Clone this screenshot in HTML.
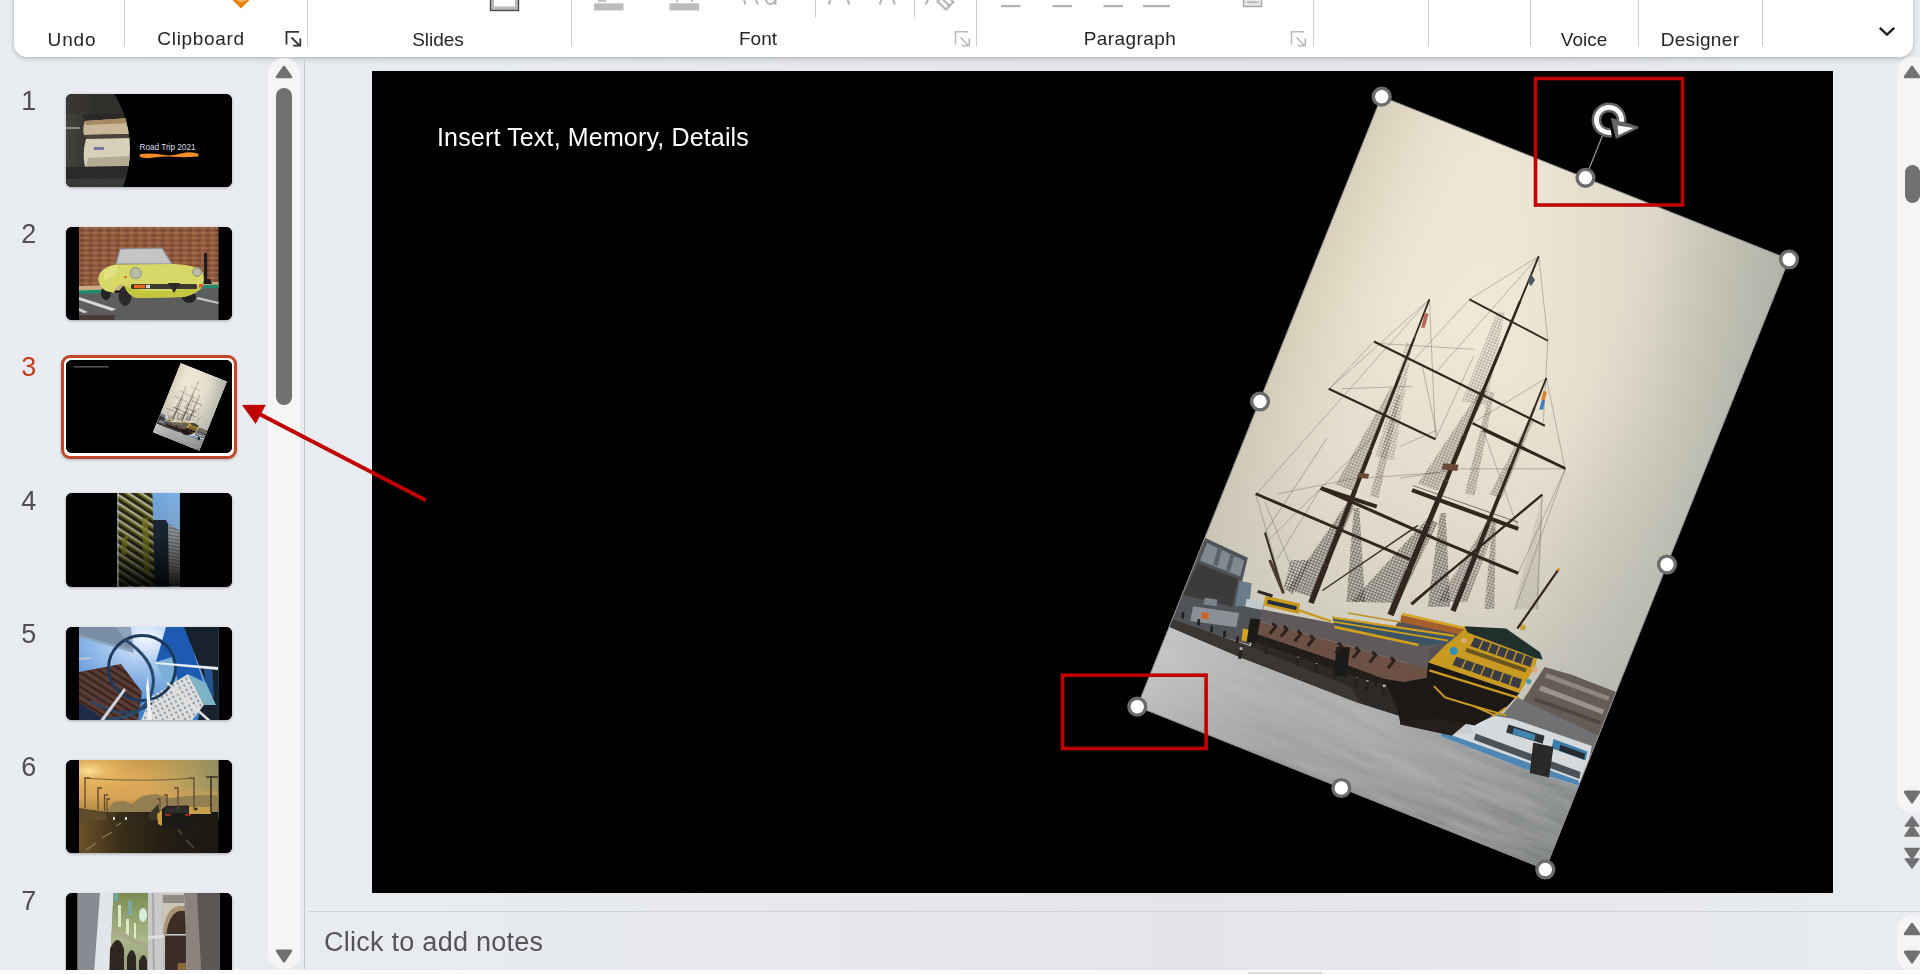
<!DOCTYPE html>
<html>
<head>
<meta charset="utf-8">
<title>PowerPoint</title>
<style>
*{box-sizing:border-box;margin:0;padding:0}
html,body{width:1920px;height:974px;overflow:hidden}
body{background:linear-gradient(90deg,#e9edf2 0%,#e8ebf0 22%,#e5e7ec 45%,#e4e5ea 62%,#e6e8ed 85%,#e8ecf0 100%);font-family:"Liberation Sans",sans-serif;position:relative;color:#222}
.abs{position:absolute}
.rl,.num,#stitle,#notes{will-change:transform}
#ribbon{left:14px;top:-20px;width:1899px;height:77px;background:#fff;border-radius:0 0 13px 13px;box-shadow:0 2px 5px rgba(70,80,92,.27),0 0 2px rgba(70,80,92,.2)}
.rl{position:absolute;top:28px;font-size:19px;line-height:22px;color:#262626;white-space:nowrap;transform:translateX(-50%)}
.sep{position:absolute;top:0;width:1px;height:46px;background:#cdcdcd}
.num{position:absolute;left:0;width:57.5px;text-align:center;font-size:27px;line-height:30px;color:#505050}
.th{position:absolute;left:65.5px;width:166px;height:93.4px;border-radius:6px;background:#000;overflow:hidden;box-shadow:0 1px 3px rgba(0,0,0,.3)}
#slide{left:372px;top:71px;width:1461px;height:822px;background:#000}
#stitle{left:436.8px;top:122px;font-size:25px;line-height:30px;letter-spacing:.16px;color:#fff;white-space:nowrap}
#notes{left:324.3px;top:926px;font-size:27px;letter-spacing:.26px;line-height:32px;color:#555;white-space:nowrap}
</style>
</head>
<body>
<!-- RIBBON -->
<div id="ribbon" class="abs"></div>
<div id="ribbonc" class="abs" style="left:0;top:0;width:1920px;height:56px">
  <div class="sep" style="left:124px"></div>
  <div class="sep" style="left:307px"></div>
  <div class="sep" style="left:571px"></div>
  <div class="sep" style="left:976px"></div>
  <div class="sep" style="left:1313px"></div>
  <div class="sep" style="left:1428px"></div>
  <div class="sep" style="left:1530px"></div>
  <div class="sep" style="left:1638px"></div>
  <div class="sep" style="left:1762px"></div>

  <!-- icon fragments at top -->
  <svg class="abs" style="left:0;top:0" width="1920" height="20" viewBox="0 0 1920 20">
    <path d="M232.5 0 L241 8.6 L249.5 0 Z" fill="#e8820c"/>
    <path d="M237 0 a5 4 0 0 0 8 1 l2 -1z" fill="#f6b36a"/>
    <rect x="490.5" y="-4" width="28" height="14.5" fill="#b9b9b9" stroke="#4d4d4d" stroke-width="1.4"/>
    <rect x="494" y="-4" width="21" height="10.5" fill="#fff"/>
    <rect x="594" y="3.3" width="29.6" height="7.2" fill="#bdbdbd"/>
    <rect x="598" y="-2" width="8" height="4" fill="#c4c4c4"/>
    <rect x="669.5" y="3.3" width="29.6" height="7.2" fill="#bdbdbd"/>
    <rect x="676" y="-2" width="2" height="4" fill="#bdbdbd"/><rect x="691" y="-2" width="2" height="4" fill="#bdbdbd"/>
    <g fill="none" stroke="#b4b4b4" stroke-width="2">
      <path d="M745.5 4.5 L744 0 M758 4.5 L756 0"/>
      <path d="M766 -1 a4.5 5 0 0 0 9 0 M775.5 -3 V5"/>
      <path d="M828.5 4.5 L830.5 0 M849.5 4.5 L847.5 0"/>
      <path d="M879.5 4.5 L881.5 0 M895 4.5 L893 0"/>
      <path d="M925.5 4.5 L928 0"/>
      <path d="M937.5 1.5 L945 -6 L953.5 2 L946 9.5 Z M941 -2.5 L949.5 6" stroke-width="2"/>
    </g>
    <rect x="815" y="0" width="1" height="17.5" fill="#d0d0d0"/>
    <rect x="914" y="0" width="1" height="17.5" fill="#d0d0d0"/>
    <g fill="#b2b2b2">
      <rect x="1001" y="5" width="19.5" height="2.2"/>
      <rect x="1052.5" y="5" width="19.5" height="2.2"/>
      <rect x="1103.5" y="5" width="19.5" height="2.2"/>
      <rect x="1143" y="5" width="27" height="2.2"/>
    </g>
    <rect x="1243.5" y="-3" width="18" height="9.5" fill="#e4e4e4" stroke="#aaa" stroke-width="1.5"/>
    <rect x="1247" y="1.5" width="11" height="1.3" fill="#aaa"/>
  </svg>
  <!-- dialog launchers -->
  <svg class="abs" style="left:285.4px;top:30.4px" width="17" height="17" viewBox="0 0 17 17"><path d="M1.5 14.5 V1.8 H14" fill="none" stroke="#333" stroke-width="1.8"/><path d="M6.5 7.5 L14.8 15.8 M15.3 8.5 V15.6 H8.2" fill="none" stroke="#333" stroke-width="1.8"/></svg>
  <svg class="abs" style="left:954px;top:30px" width="17" height="17" viewBox="0 0 17 17"><path d="M1.5 14.5 V1.8 H14" fill="none" stroke="#b9b9b9" stroke-width="1.5"/><path d="M6.5 7.5 L14.8 15.8 M15.3 8.5 V15.6 H8.2" fill="none" stroke="#b9b9b9" stroke-width="1.6"/></svg>
  <svg class="abs" style="left:1290px;top:30px" width="17" height="17" viewBox="0 0 17 17"><path d="M1.5 14.5 V1.8 H14" fill="none" stroke="#b9b9b9" stroke-width="1.5"/><path d="M6.5 7.5 L14.8 15.8 M15.3 8.5 V15.6 H8.2" fill="none" stroke="#b9b9b9" stroke-width="1.6"/></svg>
  <svg class="abs" style="left:1876px;top:24px" width="22" height="16" viewBox="0 0 22 16"><path d="M3.8 3.8 L11 10.6 L18.2 3.8" fill="none" stroke="#1f1f1f" stroke-width="2.4"/></svg>
  <div class="rl" style="left:72px;top:29px;letter-spacing:.85px">Undo</div>
  <div class="rl" style="left:200.8px;letter-spacing:.66px">Clipboard</div>
  <div class="rl" style="left:438px;top:29px">Slides</div>
  <div class="rl" style="left:758px">Font</div>
  <div class="rl" style="left:1129.5px;letter-spacing:.42px">Paragraph</div>
  <div class="rl" style="left:1583.6px;top:29px">Voice</div>
  <div class="rl" style="left:1699.6px;top:29px;letter-spacing:.32px">Designer</div>
</div>
<!-- LEFT PANEL -->

<!-- left scrollbar -->
<div class="abs" style="left:268px;top:58px;width:32px;height:911.5px;background:#f5f5f5;border-radius:16px"></div>
<div class="abs" style="left:276px;top:87.5px;width:16px;height:317.5px;background:#717171;border-radius:8px"></div>
<svg class="abs" style="left:272px;top:62px" width="24" height="20" viewBox="0 0 24 20"><path d="M12 5.3 L18.7 14.8 H5.3 Z" fill="#717171" stroke="#717171" stroke-width="3" stroke-linejoin="round"/></svg>
<svg class="abs" style="left:272px;top:946px" width="24" height="20" viewBox="0 0 24 20"><path d="M12 15 L18.7 5 H5.3 Z" fill="#717171" stroke="#717171" stroke-width="3" stroke-linejoin="round"/></svg>
<div class="abs" style="left:304px;top:60px;width:1px;height:909px;background:#c5c7ca"></div>
<!-- numbers -->
<div class="num" style="top:85.6px">1</div>
<div class="num" style="top:218.9px">2</div>
<div class="num" style="top:352.2px;color:#c43e1c">3</div>
<div class="num" style="top:485.6px">4</div>
<div class="num" style="top:618.9px">5</div>
<div class="num" style="top:752.2px">6</div>
<div class="num" style="top:885.6px">7</div>
<!-- selection frame -->
<div class="abs" style="left:60.5px;top:354.5px;width:176.5px;height:104.5px;border:3.5px solid #bf472a;border-radius:9px;background:#fff;box-shadow:0 1px 3px rgba(0,0,0,.25)"></div>
<!-- thumbs -->
<div class="th" id="t1" style="top:93.5px"><svg viewBox="0 0 166 93.4" width="166" height="93.4" style="display:block">
<defs><clipPath id="c1"><circle cx="-40" cy="55" r="104"/></clipPath>
<linearGradient id="g1" x1="0" y1="0" x2="1" y2="0"><stop offset="0" stop-color="#45423d"/><stop offset=".25" stop-color="#3a3835"/><stop offset=".4" stop-color="#2a2927"/></linearGradient></defs>
<rect width="166" height="93.4" fill="#000"/>
<g clip-path="url(#c1)"><rect width="70" height="93.4" fill="url(#g1)"/>
<rect x="0" y="0" width="70" height="20" fill="#35322f" opacity=".7"/>
<path d="M16 21 L64 19 L64 24 L20 28 Z" fill="#2b2927"/>
<path d="M19 27 L64 24 L64 40 L18 41 Q16 34 19 27Z" fill="#c9b99a"/>
<path d="M19 27 L64 24 L64 29 L20 31Z" fill="#a88a62"/>
<path d="M18 41 L64 40 L64 44 L20 45Z" fill="#4a443c"/>
<path d="M20 45 L66 44 L66 72 L19 73 Q16 58 20 45Z" fill="#d6cfb9"/>
<path d="M22 64 L66 62 L66 72 L20 73Z" fill="#b5ab92"/>
<rect x="28" y="53" width="10" height="3" fill="#5a5f9a" opacity=".8"/>
<rect x="0" y="33" width="14" height="2" fill="#8a8780"/>
<path d="M0 73 L66 72 L66 93.4 L0 93.4Z" fill="#2b2a28"/>
<path d="M0 85 L66 84 L66 93.4 L0 93.4Z" fill="#3a3937"/></g>
<text x="73.5" y="55.6" font-family="Liberation Sans, sans-serif" font-size="9.4" fill="#dcdce8" textLength="56" lengthAdjust="spacingAndGlyphs">Road Trip 2021</text>
<path d="M73.5 60.2 Q85 58.6 95 60.6 T115 59.6 T132.5 59.8 L132.3 62.6 Q118 63.6 108 62.8 T88 63.6 T73.8 62.8Z" fill="#f08a24"/>
</svg></div>
<div class="th" id="t2" style="top:226.8px"><svg viewBox="0 0 166 93.4" width="166" height="93.4" style="display:block">
<defs><pattern id="brk" width="9" height="5" patternUnits="userSpaceOnUse"><rect width="9" height="5" fill="#8d583d"/><rect x="0" y="0" width="4" height="2" fill="#a56a48"/><rect x="5" y="2.5" width="3.5" height="2" fill="#74452f"/><rect x="4.5" y="0" width="3" height="1.6" fill="#96614a"/></pattern></defs>
<rect width="166" height="93.4" fill="#000"/>
<rect x="13" y="0" width="139.5" height="62" fill="url(#brk)"/>
<path d="M13 59 L152.5 55 L152.5 60 L13 65Z" fill="#c9ab86"/>
<path d="M13 63.5 L40 62.5 L40 67 L13 68Z" fill="#1f8a6c"/><path d="M128 58.5 L152.5 57.5 L152.5 61 L128 62Z" fill="#1f8a6c"/>
<path d="M13 67 L152.5 61 L152.5 93.4 L13 93.4Z" fill="#5c5e5d"/>
<path d="M13 70 L50 82 L46 84 L13 73Z" fill="#d8d8d8"/><path d="M13 81 L22 85 L18 86 L13 84Z" fill="#cfcfcf"/><path d="M132 70 L152.5 75 L152.5 77 L130 72Z" fill="#c8c8c8"/>
<path d="M13 88 L50 88 L48 93.4 L13 93.4Z" fill="#4a3c34"/>
<rect x="138" y="26" width="3.2" height="30" fill="#1e1c1c"/><path d="M136 52 L144 52 L146 57 L136 57Z" fill="#1e1c1c"/>
<path d="M50 37 L54 22 L96 21 L106 37Z" fill="#c4c6c6" stroke="#8a8c8c" stroke-width="1.2"/>
<ellipse cx="40" cy="66" rx="5" ry="7" fill="#252423"/><ellipse cx="59" cy="69" rx="6.5" ry="10" fill="#2a2928"/><ellipse cx="123" cy="70" rx="7" ry="6" fill="#252423"/>
<path d="M32 52 Q34 40 50 37.5 L106 37 Q130 38 136 44 Q139 52 137 58 Q134 66 118 70 L72 71 Q62 70 58 58 Q50 56 48 66 L40 64 Q33 60 32 52Z" fill="#d6d968"/>
<path d="M58 58 Q62 70 72 71 L118 70 Q132 66 136 58 Q120 64 90 64 Q70 64 58 58Z" fill="#c4c640"/>
<path d="M38 44 Q44 39 52 38 L50 48 Q44 50 38 54Z" fill="#e4e68a" opacity=".7"/>
<rect x="65" y="57" width="66" height="5" rx="1.5" fill="#3c3a30"/><rect x="68" y="57.8" width="11" height="3.4" fill="#e8681c"/><rect x="80" y="57.8" width="4" height="3.4" fill="#d8d8d0"/><rect x="133" y="57" width="4" height="3.5" fill="#d8602a"/>
<path d="M102 56 L114 56 L108 66Z" fill="#2a2a28"/>
<circle cx="69.7" cy="46.2" r="5.6" fill="#b9bca6" stroke="#8e9078" stroke-width="1"/><circle cx="131" cy="45" r="4.4" fill="#b9bca6" stroke="#8e9078" stroke-width="1"/>
<circle cx="59.5" cy="50" r="1.3" fill="#d8602a"/>
</svg></div>
<div class="th" id="t3" style="top:360.1px;box-shadow:none"><svg viewBox="0 0 166 93.4" width="166" height="93.4" style="display:block"><rect width="166" height="93.4" fill="#000"/><g transform="scale(0.11362) translate(-372 -71)"><use href="#pic"/></g><rect x="7.6" y="6.3" width="35" height="1.1" fill="#777"/></svg></div>
<div class="th" id="t4" style="top:493.4px"><svg viewBox="0 0 166 93.4" width="166" height="93.4" style="display:block">
<defs><pattern id="strp" width="10" height="7" patternUnits="userSpaceOnUse" patternTransform="rotate(33)"><rect width="10" height="7" fill="#2a2a18"/><rect y="0" width="10" height="2.1" fill="#b4b49c"/><rect y="2.1" width="10" height="1.5" fill="#7c7c22"/></pattern>
<linearGradient id="sky4" x1="0" y1="0" x2="1" y2="1"><stop offset="0" stop-color="#5a9ad8"/><stop offset="1" stop-color="#a4c8f0"/></linearGradient>
<linearGradient id="dk4" x1="0" y1="0" x2="0" y2="1"><stop offset="0" stop-color="#000" stop-opacity="0"/><stop offset=".45" stop-color="#000" stop-opacity=".15"/><stop offset=".8" stop-color="#000" stop-opacity=".6"/><stop offset="1" stop-color="#000" stop-opacity=".9"/></linearGradient>
<pattern id="gr4" width="3" height="3.4" patternUnits="userSpaceOnUse" patternTransform="rotate(12)"><rect width="3" height="3.4" fill="#7c8084"/><rect width="3" height="1.5" fill="#a8acae"/></pattern></defs>
<rect width="166" height="93.4" fill="#000"/>
<rect x="51.4" y="0" width="62.5" height="93.4" fill="url(#sky4)"/>
<path d="M87 27 L100 27 L102 31 L113.9 38 L113.9 93.4 L87 93.4Z" fill="#1c2a36"/>
<path d="M102 31 L113.9 38 L113.9 93.4 L103 93.4Z" fill="url(#gr4)"/>
<path d="M51.4 0 L86.4 0 L88.7 93.4 L51.4 93.4Z" fill="url(#strp)"/>
<path d="M76 25 L82 25 L84 80 L78 80Z" fill="#8a8a22" opacity=".7"/><path d="M56 45 L62 42 L60 62 L55 62Z" fill="#8a8a22" opacity=".7"/>
<rect x="51.4" y="0" width="62.5" height="93.4" fill="url(#dk4)"/>
<rect x="51.4" y="0" width="1.2" height="93.4" fill="#c8c8c0" opacity=".6"/>
</svg></div>
<div class="th" id="t5" style="top:626.7px"><svg viewBox="0 0 166 93.4" width="166" height="93.4" style="display:block">
<defs><radialGradient id="sky5" cx=".48" cy=".12" r=".8"><stop offset="0" stop-color="#f4f8ff"/><stop offset=".35" stop-color="#a8c8f0"/><stop offset="1" stop-color="#3f82cc"/></radialGradient>
<pattern id="br5" width="6" height="6" patternUnits="userSpaceOnUse" patternTransform="rotate(32)"><rect width="6" height="6" fill="#5c3c36"/><rect width="6" height="2.4" fill="#3a2420"/></pattern>
<pattern id="wh5" width="5" height="5" patternUnits="userSpaceOnUse" patternTransform="rotate(-28)"><rect width="5" height="5" fill="#dedede"/><rect x="1" y="1" width="2" height="2.4" fill="#8e98a4"/></pattern></defs>
<rect width="166" height="93.4" fill="#000"/>
<rect x="13" y="0" width="139.5" height="93.4" fill="url(#sky5)"/>
<path d="M13 0 L65 0 L68 26 L13 10Z" fill="#8ea4bc"/><path d="M13 0 L50 0 L66 22 L13 8Z" fill="#6c8098" opacity=".6"/>
<path d="M13 31 L25 30 L25 32 L13 33Z" fill="#b8c8d8"/>
<path d="M13 45 L55 37 L76 65 L72 93.4 L13 93.4Z" fill="url(#br5)"/>
<path d="M13 75 L40 93.4 L13 93.4Z" fill="#1e2c48"/>
<path d="M100 0 L120 0 L137 55 L106 62 L90 35Z" fill="#1d5ab2"/>
<path d="M90 35 L106 30 L112 55 L100 60Z" fill="#7ab0d8"/>
<path d="M118 0 L152.5 0 L152.5 93.4 L132 93.4 L140 56Z" fill="#18222c"/>
<path d="M138 40 L146 40 L148 70 L140 70Z" fill="#2a6ab8" opacity=".7"/>
<path d="M85 70 L122 47 L138 78 L126 93.4 L75 93.4Z" fill="url(#wh5)"/>
<path d="M122 47 L140 56 L150 78 L138 78Z" fill="#7fb4c8"/>
<ellipse cx="76" cy="41" rx="33.5" ry="32.5" fill="none" stroke="#1c3a5c" stroke-width="3"/>
<path d="M58 12 Q100 40 82 74 Q70 92 36 93" fill="none" stroke="#2a4a6c" stroke-width="3"/>
<path d="M25 74 Q60 96 86 76" fill="none" stroke="#28466a" stroke-width="2.5"/>
<path d="M89 35 L152 40 L152 43 L90 37Z" fill="#e8ecf0"/>
<path d="M82 48 L86 93.4 L82 93.4 L80 60Z" fill="#f0f0f0"/>
<path d="M58 61 L60 63 L38 93.4 L34 93.4Z" fill="#d0d4dc"/>
<path d="M102 55 L145 93.4 L141 93.4 L100 56Z" fill="#e0e0e0"/>
</svg></div>
<div class="th" id="t6" style="top:760px"><svg viewBox="0 0 166 93.4" width="166" height="93.4" style="display:block">
<defs><linearGradient id="sky6" x1="0" y1="0" x2="0" y2="1"><stop offset="0" stop-color="#c69a4e"/><stop offset=".35" stop-color="#dba95a"/><stop offset=".6" stop-color="#d9a456"/><stop offset="1" stop-color="#9a7838"/></linearGradient>
<radialGradient id="sun6" cx=".07" cy=".18" r=".45"><stop offset="0" stop-color="#ffe6a0" stop-opacity=".95"/><stop offset=".3" stop-color="#f4c46c" stop-opacity=".6"/><stop offset="1" stop-color="#e0a850" stop-opacity="0"/></radialGradient>
<linearGradient id="gr6v" x1="0" y1="0" x2="0" y2="1"><stop offset="0" stop-color="#fff"/><stop offset=".45" stop-color="#fff"/><stop offset=".7" stop-color="#000"/></linearGradient><mask id="m6"><rect x="13" y="0" width="139.5" height="60" fill="url(#gr6v)"/></mask><linearGradient id="gr6" x1="0" y1="0" x2="1" y2="0"><stop offset=".5" stop-color="#8a946a" stop-opacity="0"/><stop offset="1" stop-color="#7e8a66" stop-opacity=".75"/></linearGradient>
<linearGradient id="rd6" x1="0" y1="0" x2="1" y2="0"><stop offset="0" stop-color="#6a5228"/><stop offset=".3" stop-color="#3a2e1a"/><stop offset=".6" stop-color="#241e14"/><stop offset="1" stop-color="#1a1812"/></linearGradient></defs>
<rect width="166" height="93.4" fill="#000"/>
<rect x="13" y="0" width="139.5" height="60" fill="url(#sky6)"/><rect x="13" y="0" width="139.5" height="60" fill="url(#sun6)"/><rect x="13" y="0" width="139.5" height="60" fill="url(#gr6)" mask="url(#m6)"/>
<path d="M40 52 L48 42 L58 41 L66 44 L76 36 L90 34 L104 38 L120 36 L140 35 L152.5 35 L152.5 58 L40 58Z" fill="#937f52"/>
<path d="M13 48 L40 52 L152.5 52 L152.5 93.4 L13 93.4Z" fill="url(#rd6)"/>
<path d="M13 48 L40 54 L40 60 L13 62Z" fill="#5e4c2a"/>
<path d="M82 55 L92 44 L96 60 L84 60Z" fill="#3a3424"/>
<path d="M95 50 L100 46 L122 45.5 L126 52 L127 66 L125 68 L96 68 L94 62Z" fill="#1c1a16"/><path d="M100 47 L121 46.5 L124 53 L98 53.5Z" fill="#2c2c28"/><rect x="99" y="54" width="6" height="1.8" fill="#a03028"/><rect x="119" y="54" width="6" height="1.8" fill="#a03028"/>
<path d="M91 54 L96 50 L96 66 L92 64Z" fill="#c89a40"/>
<rect x="123" y="47" width="22" height="7" fill="#c8a050"/><circle cx="130" cy="49" r="1.5" fill="#2a2418"/>
<path d="M50 56 L70 55 L72 61 L48 61Z" fill="#30291c"/><rect x="47" y="57" width="2" height="3" fill="#e8e0c8"/><rect x="59" y="57" width="2" height="3" fill="#e8e0c8"/>
<g stroke="#5c4c2c" stroke-width="1.3" fill="none"><path d="M19 48 V18 H24"/><path d="M32 50 V28 H36"/><path d="M38.5 51 V35 H42"/><path d="M41 52 V39 H44"/><path d="M128 50 V18 H123"/><path d="M112 50 V28 H108"/><path d="M101 46 V35 H98"/><path d="M94 47 V39 H91"/></g>
<g stroke="#3c3424" stroke-width="1.6" fill="none"><path d="M145 52 V16 M140 17 H152"/></g>
<path d="M24 18.5 Q76 22 123 18.5" fill="none" stroke="#4c4028" stroke-width=".7"/>
<path d="M36 78 L46 72 M50 66 L55 63 M20 90 L30 83" stroke="#8a7848" stroke-width="1.4"/><path d="M112 70 L116 74 M120 80 L128 88" stroke="#5a5038" stroke-width="1.2"/>
</svg></div>
<div class="th" id="t7" style="top:893.3px"><svg viewBox="0 0 166 93.4" width="166" height="93.4" style="display:block">
<defs><linearGradient id="gn7" x1="0" y1="0" x2="0" y2="1"><stop offset="0" stop-color="#7c8a52"/><stop offset=".5" stop-color="#aab88a"/><stop offset="1" stop-color="#8a8c70"/></linearGradient></defs>
<rect width="166" height="93.4" fill="#000"/>
<rect x="11.5" y="0" width="142.5" height="93.4" fill="#8a8c90"/>
<path d="M11.5 0 L34 0 L27 93.4 L11.5 93.4Z" fill="#888b91"/>
<path d="M34 0 L47.5 0 L43 93.4 L27 93.4Z" fill="#e2e6ea"/>
<path d="M47.5 0 L82 0 L82 93.4 L43 93.4Z" fill="url(#gn7)"/>
<path d="M48 0 L52 0 L52 8 L48 8Z" fill="#6aa8a0"/><path d="M62 8 L66 8 L66 22 L62 22Z" fill="#78a8a0"/>
<path d="M52 12 L55 12 L55 34 L52 34Z M60 26 L63 26 L63 46 L60 46Z M68 30 L70 30 L70 48 L68 48Z" fill="#dce8c8"/>
<ellipse cx="77" cy="22" rx="4" ry="7" fill="#d4ecd8"/>
<path d="M46 34 L82 52 L82 56 L46 40Z" fill="#a8a888"/>
<path d="M44 56 Q52 38 58 56 L58 93.4 L43 93.4Z" fill="#2e2620"/><path d="M61 64 Q66 50 70 64 L70 93.4 L61 93.4Z" fill="#2e2620"/><path d="M73 68 Q78 56 81 68 L81 93.4 L73 93.4Z" fill="#2e2620"/>
<path d="M82 0 L96 0 L98 93.4 L82 93.4Z" fill="#c9c9c9"/><path d="M86 0 L88 0 L89 93.4 L87 93.4Z" fill="#a8a8a8"/><path d="M82 43 L97 42 L97 45 L82 46Z" fill="#e0e0e0"/>
<path d="M96 0 L120 0 L120 93.4 L98 93.4Z" fill="#cdc6b8"/><rect x="97" y="2" width="21" height="8" fill="#8e8a84"/>
<path d="M99 93.4 L99 44 Q100 20 112 16 L120 16 L120 93.4Z" fill="#3a2e26"/><path d="M97 40 Q99 16 112 13 L120 13 L120 18 L113 18 Q102 22 100 44Z" fill="#a89474"/>
<path d="M110 93.4 L112 70 L120 70 L120 93.4Z" fill="#8a6a3a"/><rect x="100" y="41" width="20" height="1.6" fill="#c8c8c8"/>
<path d="M118 0 L131 0 L136 93.4 L122 93.4Z" fill="#8c827e"/>
<path d="M131 0 L154 0 L154 93.4 L136 93.4Z" fill="#5c5655"/>
</svg></div>

<!-- SLIDE -->
<div id="slide" class="abs"></div>
<div id="stitle" class="abs">Insert Text, Memory, Details</div>

<!-- OVERLAY -->
<svg class="abs" style="left:0;top:0" width="1920" height="974" viewBox="0 0 1920 974">
<defs>
  <clipPath id="pclip"><polygon points="1381.5,96.5 1789,259.3 1545.3,869.3 1137.3,706.5"/></clipPath>
  <radialGradient id="skyr" cx=".38" cy=".25" r=".85">
    <stop offset="0" stop-color="#f0e8d6"/><stop offset=".45" stop-color="#ece4d2"/><stop offset=".65" stop-color="#e0dac9"/><stop offset=".85" stop-color="#d0cdc0"/><stop offset="1" stop-color="#c0c0b5"/>
  </radialGradient>
  <linearGradient id="skyrt" x1=".68" y1="0" x2="1" y2="0"><stop offset="0" stop-color="#a8aaa2" stop-opacity="0"/><stop offset="1" stop-color="#a8aaa2" stop-opacity=".38"/></linearGradient>
  <linearGradient id="skytr" x1="1" y1="0" x2=".5" y2=".3">
    <stop offset="0" stop-color="#a3a69a" stop-opacity=".62"/><stop offset=".5" stop-color="#b4b6aa" stop-opacity=".25"/><stop offset="1" stop-color="#b4b6aa" stop-opacity="0"/>
  </linearGradient>
  <linearGradient id="skyh" x1="0" y1="0" x2="1" y2="0">
    <stop offset="0" stop-color="#b5a888" stop-opacity=".34"/><stop offset=".22" stop-color="#cfc6ae" stop-opacity="0"/><stop offset="1" stop-color="#b9bbb0" stop-opacity="0"/>
  </linearGradient>
  <linearGradient id="skyv" x1="0" y1="0" x2="0" y2="1">
    <stop offset=".3" stop-color="#c2c1b8" stop-opacity="0"/><stop offset=".6" stop-color="#c2c1b8" stop-opacity=".3"/><stop offset=".88" stop-color="#bcbcb4" stop-opacity=".6"/>
  </linearGradient>
  <pattern id="mesh" width="3" height="3" patternUnits="userSpaceOnUse" patternTransform="rotate(21.8)"><path d="M0 .4H3M.4 0V3" stroke="#3a3632" stroke-width=".75" fill="none"/></pattern>
  <filter id="wtex" x="0" y="0" width="1" height="1"><feTurbulence type="fractalNoise" baseFrequency="0.012 0.11" numOctaves="3" seed="7"/><feColorMatrix type="matrix" values="0 0 0 0 0.5  0 0 0 0 0.5  0 0 0 0 0.5  1.6 0 0 0 -0.45"/><feComposite in2="SourceGraphic" operator="in"/></filter>
  <filter id="wtex2" x="0" y="0" width="1" height="1"><feTurbulence type="fractalNoise" baseFrequency="0.012 0.11" numOctaves="3" seed="3"/><feColorMatrix type="matrix" values="0 0 0 0 0.85  0 0 0 0 0.86  0 0 0 0 0.85  1.5 0 0 0 -0.5"/><feComposite in2="SourceGraphic" operator="in"/></filter>
  <linearGradient id="wat" x1="0" y1="0" x2="0" y2="1">
    <stop offset="0" stop-color="#a9aba9"/><stop offset=".4" stop-color="#a8aaa8"/><stop offset="1" stop-color="#8f918f"/>
  </linearGradient>
  <linearGradient id="wath" x1="0" y1="0" x2="1" y2="0">
    <stop offset="0" stop-color="#d4d6d4" stop-opacity=".7"/><stop offset=".45" stop-color="#a8aaa8" stop-opacity=".15"/><stop offset="1" stop-color="#5c6264" stop-opacity=".5"/>
  </linearGradient>
  <g id="pic" clip-path="url(#pclip)">
<!--PICSTART-->
<g transform="translate(1381.5 96.5) rotate(21.777)">
<rect x="-2" y="-2" width="442.8" height="661.1" fill="#d6d2c4"/>
<rect x="-2" y="-2" width="442.8" height="661.1" fill="url(#skyr)"/>
<rect x="-2" y="-2" width="442.8" height="661.1" fill="url(#skyh)"/>
<rect x="-2" y="-2" width="442.8" height="661.1" fill="url(#skyv)"/>
<rect x="-2" y="-2" width="442.8" height="661.1" fill="url(#skytr)"/>
<rect x="-2" y="-2" width="442.8" height="661.1" fill="url(#skyrt)"/>
</g>
<polygon points="1205.3,538.0 1247.8,557.7 1242.0,581.8 1251.4,583.5 1249.2,600.5 1264.3,602.7 1260.7,620.6 1249.2,645.1 1171.6,620.6 1185.9,580.4" fill="#4f5357" />
<polygon points="1207.2,543.0 1244.2,560.5 1240.3,576.4 1200.0,560.5" fill="#7f8991" />
<polygon points="1217.6,548.0 1221.9,549.9 1217.6,566.0 1213.3,564.3" fill="#59626a" />
<polygon points="1230.5,554.2 1234.1,555.9 1229.8,571.8 1226.2,570.3" fill="#59626a" />
<polygon points="1198.2,563.1 1238.0,579.2 1232.2,606.5 1183.4,595.0" fill="#3d3b39" />
<polygon points="1239.4,580.7 1251.4,583.5 1249.2,606.3 1235.1,606.3" fill="#6a7b8a" />
<polygon points="1246.6,598.8 1264.3,602.5 1262.1,610.0 1245.2,606.5" fill="#c2c9cc" />
<polygon points="1193.1,606.3 1239.1,612.9 1236.3,627.2 1190.3,620.9" fill="#8a9095" />
<polygon points="1201.8,612.0 1208.9,613.2 1208.2,619.5 1201.0,618.3" fill="#c8642a" />
<polygon points="1204.6,597.6 1217.6,599.8 1216.4,606.3 1203.5,604.5" fill="#7a848c" />
<polygon points="1544.5,666.9 1571.6,674.8 1612.2,690.6 1628.0,697.4 1603.2,742.5 1521.9,701.9" fill="#665c57" />
<polygon points="1546.7,673.0 1609.9,696.7 1608.1,700.8 1544.9,677.5" fill="#8f8680" />
<polygon points="1541.1,685.6 1604.3,709.8 1602.5,714.3 1538.8,690.2" fill="#9a928b" />
<polygon points="1535.4,697.4 1600.9,721.1 1599.8,724.5 1533.6,700.8" fill="#4e4642" />
<polygon points="1497.1,712.1 1598.6,738.0 1594.1,753.8 1490.3,726.7" fill="#7d8083" />
<polygon points="1501.6,717.7 1596.4,742.5 1595.5,745.9 1500.5,721.1" fill="#9a9ea2" />
<polygon points="1517.4,697.4 1603.2,738.0 1594.1,758.3 1490.3,729.0" fill="#6f7173" />
<g transform="translate(1381.5 96.5) rotate(21.777)">
<rect x="-2" y="566" width="442.8" height="93.1" fill="url(#wat)"/>
<rect x="-2" y="566" width="442.8" height="93.1" fill="url(#wath)"/>
<rect x="-2" y="566" width="442.8" height="93.1" fill="#888" filter="url(#wtex)" opacity=".55"/>
</g>
<polygon points="1492.6,715.4 1512.9,718.8 1591.9,745.9 1588.5,760.6 1580.6,786.5 1526.4,769.6 1440.6,736.2 1441.8,729.0 1465.5,721.1" fill="#d6d9db" />
<polygon points="1508.4,724.5 1544.5,735.8 1542.7,743.7 1506.1,732.4" fill="#2c3138" />
<polygon points="1514.0,727.9 1535.4,734.6 1534.3,740.7 1512.4,734.0" fill="#3f84ad" />
<polygon points="1553.5,739.1 1587.4,751.6 1585.6,760.6 1551.7,748.2" fill="#3c7ea8" />
<polygon points="1560.3,744.8 1585.1,753.8 1584.0,759.5 1559.1,750.4" fill="#262b31" />
<polygon points="1475.6,733.5 1580.6,771.9 1579.5,779.1 1474.0,739.8" fill="#4b5258" />
<polygon points="1441.8,731.7 1578.3,780.5 1579.9,785.9 1526.4,769.6 1440.6,736.2" fill="#4f86b4" />
<polygon points="1442.9,729.0 1467.7,722.2 1474.5,733.5 1445.1,732.4" fill="#c9cdd0" />
<polygon points="1533.2,742.5 1553.5,747.0 1549.0,777.5 1529.8,773.0" fill="#2a2927" />
<polygon points="1171.6,619.2 1250.6,646.5 1254.0,633.0 1333.5,658.9 1383.4,677.4 1450.0,689.4 1450.0,731.9 1359.4,703.3 1242.0,658.0 1169.8,627.1" fill="#2d2926" />
<polygon points="1171.6,619.2 1250.6,646.5 1352.0,687.5 1359.4,703.3 1242.0,658.0 1169.8,627.1" fill="#3b3631" />
<polyline points="1183.1,612.0 1182.6,618.5" fill="none" stroke="#211e1c" stroke-width="2.6" />
<polyline points="1198.9,619.2 1198.4,625.7" fill="none" stroke="#211e1c" stroke-width="2.6" />
<polyline points="1211.8,625.7 1211.4,632.1" fill="none" stroke="#211e1c" stroke-width="2.6" />
<polyline points="1224.8,630.7 1224.3,637.2" fill="none" stroke="#211e1c" stroke-width="2.6" />
<polyline points="1237.7,636.4 1237.3,642.9" fill="none" stroke="#211e1c" stroke-width="2.6" />
<polyline points="1241.1,648.7 1239.6,658.9" fill="none" stroke="#23201d" stroke-width="3" />
<circle cx="1241.1" cy="648.7" r="1.6" fill="#b5b0a6"/>
<polyline points="1267.0,644.1 1265.5,654.3" fill="none" stroke="#23201d" stroke-width="3" />
<circle cx="1267.0" cy="644.1" r="1.6" fill="#b5b0a6"/>
<polyline points="1298.4,656.1 1296.9,666.3" fill="none" stroke="#23201d" stroke-width="3" />
<circle cx="1298.4" cy="656.1" r="1.6" fill="#b5b0a6"/>
<polyline points="1316.9,662.6 1315.4,672.8" fill="none" stroke="#23201d" stroke-width="3" />
<circle cx="1316.9" cy="662.6" r="1.6" fill="#b5b0a6"/>
<polyline points="1336.3,669.1 1334.8,679.2" fill="none" stroke="#23201d" stroke-width="3" />
<circle cx="1336.3" cy="669.1" r="1.6" fill="#b5b0a6"/>
<polyline points="1357.5,676.5 1356.1,686.6" fill="none" stroke="#23201d" stroke-width="3" />
<circle cx="1357.5" cy="676.5" r="1.6" fill="#b5b0a6"/>
<polyline points="1367.7,680.1 1366.2,690.3" fill="none" stroke="#23201d" stroke-width="3" />
<circle cx="1367.7" cy="680.1" r="1.6" fill="#b5b0a6"/>
<polyline points="1377.0,675.5 1375.5,685.7" fill="none" stroke="#23201d" stroke-width="3" />
<circle cx="1377.0" cy="675.5" r="1.6" fill="#b5b0a6"/>
<polyline points="1384.3,685.7 1382.9,695.9" fill="none" stroke="#23201d" stroke-width="3" />
<circle cx="1384.3" cy="685.7" r="1.6" fill="#b5b0a6"/>
<polygon points="1398.8,621.3 1465.4,628.8 1429.0,661.9 1429.0,673.6 1379.1,649.0" fill="#565053" />
<polygon points="1262.3,609.5 1333.5,623.2 1357.0,631.7 1418.6,645.0 1443.2,644.1 1430.5,647.7 1428.2,661.7 1428.7,669.4 1333.5,641.7 1259.2,621.4" fill="#5f595b" />
<polygon points="1259.2,621.4 1333.5,641.7 1428.7,669.4 1428.2,661.7 1429.8,676.6 1400.0,683.4 1383.4,678.7 1333.5,660.2 1257.4,634.3" fill="#6d5044" />
<polygon points="1257.4,634.3 1333.5,660.2 1383.4,678.7 1430.0,686.1 1450.0,690.3 1450.0,700.5 1359.4,678.3 1254.0,641.3" fill="#231d1a" />
<polygon points="1250.3,618.2 1260.5,619.5 1255.9,643.5 1245.7,641.7" fill="#1c1a19" />
<polygon points="1242.9,628.4 1248.5,629.5 1246.6,641.7 1241.5,640.6" fill="#d2a11e" />
<polygon points="1336.3,646.9 1350.1,647.2 1346.5,676.8 1334.4,675.0" fill="#1c1a19" />
<polyline points="1272.5,623.2 1275.8,626.5 1269.7,633.9" fill="none" stroke="#2b211d" stroke-width="3" />
<polyline points="1283.6,626.0 1286.9,629.3 1280.8,636.7" fill="none" stroke="#2b211d" stroke-width="3" />
<polyline points="1297.5,630.6 1300.8,633.9 1294.7,641.3" fill="none" stroke="#2b211d" stroke-width="3" />
<polyline points="1310.4,635.2 1313.7,638.6 1307.6,646.0" fill="none" stroke="#2b211d" stroke-width="3" />
<polyline points="1338.1,642.6 1341.5,646.0 1335.4,653.3" fill="none" stroke="#2b211d" stroke-width="3" />
<polyline points="1355.7,647.2 1359.0,650.6 1352.9,658.0" fill="none" stroke="#2b211d" stroke-width="3" />
<polyline points="1372.3,651.9 1375.7,655.2 1369.6,662.6" fill="none" stroke="#2b211d" stroke-width="3" />
<polyline points="1390.8,657.4 1394.1,660.7 1388.0,668.1" fill="none" stroke="#2b211d" stroke-width="3" />
<polygon points="1332.3,616.7 1454.3,635.2 1450.6,641.6 1443.2,644.3 1418.6,645.5 1334.8,627.8" fill="#3b5565" />
<polyline points="1332.3,617.5 1454.3,635.9" fill="none" stroke="#cf9f1e" stroke-width="2.2" />
<polyline points="1333.3,621.6 1448.1,640.6" fill="none" stroke="#cf9f1e" stroke-width="1.6" />
<polyline points="1334.5,626.8 1418.6,645.0" fill="none" stroke="#cf9f1e" stroke-width="2.8" />
<polygon points="1401.3,614.9 1464.4,629.0 1461.7,634.9 1400.1,621.9" fill="#a45f2b" />
<polyline points="1402.3,613.9 1465.6,628.5" fill="none" stroke="#d4a31f" stroke-width="2.4" />
<polyline points="1348.3,613.0 1401.3,622.3" fill="none" stroke="#b89028" stroke-width="1.4" />
<polygon points="1265.1,595.7 1299.9,603.4 1298.8,614.0 1263.8,605.5" fill="#c8991d" />
<polygon points="1267.9,599.7 1296.9,606.2 1296.2,610.3 1267.0,603.6" fill="#26303a" />
<polyline points="1299.3,610.3 1331.3,621.4" fill="none" stroke="#c8991d" stroke-width="2.4" />
<polyline points="1257.7,591.4 1272.5,596.0" fill="none" stroke="#2a2624" stroke-width="3" />
<polygon points="1400.0,715.4 1440.6,715.4 1474.5,724.5 1494.8,715.4 1467.7,722.2 1451.9,735.8 1400.0,724.5" fill="#241f1c" />
<polygon points="1383.4,678.7 1400.0,682.7 1426.6,677.5 1428.2,661.7 1519.6,692.9 1506.1,707.5 1474.5,725.6 1440.6,718.8 1400.0,721.1 1396.4,706.0" fill="#1c1816" />
<polygon points="1465.5,628.5 1537.7,654.5 1535.4,665.8 1519.6,692.9 1428.2,662.4 1445.1,645.5" fill="#c99a22" />
<polygon points="1464.3,626.3 1506.1,628.5 1540.0,652.2 1542.7,659.5 1535.4,657.9 1467.7,632.4" fill="#20302d" />
<polygon points="1474.5,637.6 1533.2,657.9 1530.2,666.9 1470.4,645.9" fill="#3a3c44" />
<polygon points="1456.4,656.7 1521.9,679.3 1519.0,688.4 1452.4,665.1" fill="#3a3c44" />
<polyline points="1482.9,640.5 1479.0,648.9" fill="none" stroke="#c99a22" stroke-width="1.4" />
<polyline points="1465.8,660.0 1461.9,668.4" fill="none" stroke="#c99a22" stroke-width="1.4" />
<polyline points="1491.3,643.4 1487.5,651.9" fill="none" stroke="#c99a22" stroke-width="1.4" />
<polyline points="1475.1,663.2 1471.4,671.7" fill="none" stroke="#c99a22" stroke-width="1.4" />
<polyline points="1499.6,646.3 1496.1,654.9" fill="none" stroke="#c99a22" stroke-width="1.4" />
<polyline points="1484.5,666.4 1480.9,675.1" fill="none" stroke="#c99a22" stroke-width="1.4" />
<polyline points="1508.0,649.2 1504.6,657.9" fill="none" stroke="#c99a22" stroke-width="1.4" />
<polyline points="1493.8,669.6 1490.4,678.4" fill="none" stroke="#c99a22" stroke-width="1.4" />
<polyline points="1516.4,652.1 1513.2,660.9" fill="none" stroke="#c99a22" stroke-width="1.4" />
<polyline points="1503.2,672.9 1499.9,681.7" fill="none" stroke="#c99a22" stroke-width="1.4" />
<polyline points="1524.8,655.0 1521.7,663.9" fill="none" stroke="#c99a22" stroke-width="1.4" />
<polyline points="1512.5,676.1 1509.4,685.0" fill="none" stroke="#c99a22" stroke-width="1.4" />
<polygon points="1466.8,647.7 1526.9,668.5 1525.5,672.6 1465.5,651.8" fill="#6b5620" />
<polyline points="1433.9,686.1 1445.1,697.4 1463.2,703.0 1506.1,715.4" fill="none" stroke="#c99a22" stroke-width="2" />
<polyline points="1429.3,670.3 1518.5,697.8" fill="none" stroke="#c99a22" stroke-width="2.4" />
<polyline points="1474.5,706.4 1494.8,715.4 1506.1,707.5" fill="none" stroke="#c99a22" stroke-width="1.8" />
<circle cx="1453.7" cy="651.1" r="4" fill="#2f8fb8"/>
<circle cx="1463.9" cy="640.5" r="2.6" fill="#d9a88a"/>
<circle cx="1534.8" cy="669.8" r="3" fill="#d9a88a"/>
<circle cx="1528.7" cy="681.6" r="2.5" fill="#3a9ab8"/>
<circle cx="1523.0" cy="627.4" r="3" fill="#c9a23a"/>
<polygon points="1390.9,387.4 1395.8,389.9 1353.9,490.9 1335.4,484.7" fill="rgba(72,68,62,0.09)" />
<polygon points="1390.9,387.4 1395.8,389.9 1353.9,490.9 1335.4,484.7" fill="url(#mesh)" opacity="0.46"/>
<polygon points="1397.0,394.8 1400.7,394.8 1378.5,498.3 1369.9,495.8" fill="rgba(72,68,62,0.08)" />
<polygon points="1397.0,394.8 1400.7,394.8 1378.5,498.3 1369.9,495.8" fill="url(#mesh)" opacity="0.42"/>
<polygon points="1482.0,387.4 1488.2,389.9 1437.7,490.9 1418.0,483.5" fill="rgba(72,68,62,0.09)" />
<polygon points="1482.0,387.4 1488.2,389.9 1437.7,490.9 1418.0,483.5" fill="url(#mesh)" opacity="0.46"/>
<polygon points="1489.4,392.3 1494.3,392.3 1474.6,495.8 1464.8,493.3" fill="rgba(72,68,62,0.08)" />
<polygon points="1489.4,392.3 1494.3,392.3 1474.6,495.8 1464.8,493.3" fill="url(#mesh)" opacity="0.42"/>
<polygon points="1528.8,419.4 1533.8,420.7 1501.7,498.3 1489.4,494.6" fill="rgba(72,68,62,0.08)" />
<polygon points="1528.8,419.4 1533.8,420.7 1501.7,498.3 1489.4,494.6" fill="url(#mesh)" opacity="0.42"/>
<polygon points="1350.2,498.3 1353.9,508.1 1312.0,596.8 1287.4,589.4" fill="rgba(72,68,62,0.14)" />
<polygon points="1350.2,498.3 1353.9,508.1 1312.0,596.8 1287.4,589.4" fill="url(#mesh)" opacity="0.71"/>
<polygon points="1353.9,508.1 1359.3,508.1 1365.0,601.7 1346.5,601.7" fill="rgba(72,68,62,0.14)" />
<polygon points="1353.9,508.1 1359.3,508.1 1365.0,601.7 1346.5,601.7" fill="url(#mesh)" opacity="0.71"/>
<polygon points="1427.8,518.0 1437.7,522.9 1398.3,603.0 1351.4,601.7" fill="rgba(72,68,62,0.14)" />
<polygon points="1427.8,518.0 1437.7,522.9 1398.3,603.0 1351.4,601.7" fill="url(#mesh)" opacity="0.71"/>
<polygon points="1440.1,513.0 1445.6,513.0 1450.0,606.7 1427.8,606.7" fill="rgba(72,68,62,0.14)" />
<polygon points="1440.1,513.0 1445.6,513.0 1450.0,606.7 1427.8,606.7" fill="url(#mesh)" opacity="0.71"/>
<polygon points="1489.4,518.0 1496.8,522.9 1467.2,601.7 1437.7,601.7" fill="rgba(72,68,62,0.11)" />
<polygon points="1489.4,518.0 1496.8,522.9 1467.2,601.7 1437.7,601.7" fill="url(#mesh)" opacity="0.59"/>
<polygon points="1491.9,527.8 1495.8,527.8 1494.3,609.1 1484.5,609.1" fill="rgba(72,68,62,0.11)" />
<polygon points="1491.9,527.8 1495.8,527.8 1494.3,609.1 1484.5,609.1" fill="url(#mesh)" opacity="0.59"/>
<polygon points="1541.1,498.3 1542.6,498.3 1538.7,609.1 1514.0,609.1" fill="rgba(72,68,62,0.03)" />
<polygon points="1541.1,498.3 1542.6,498.3 1538.7,609.1 1514.0,609.1" fill="url(#mesh)" opacity="0.15"/>
<polygon points="1406.3,343.2 1412.4,343.2 1394.0,460.2 1375.5,457.1" fill="url(#mesh)" opacity=".38"/>
<polygon points="1497.1,312.4 1504.8,312.4 1486.3,404.8 1461.7,401.7" fill="url(#mesh)" opacity=".38"/>
<polygon points="1311.3,560.0 1291.0,560.0 1283.6,587.7 1292.8,595.1" fill="url(#mesh)" opacity=".8"/>
<polyline points="1429.4,299.4 1329.3,388.7" fill="none" stroke="rgba(60,56,52,.42)" stroke-width="0.7" />
<polyline points="1429.4,299.4 1435.5,439.2" fill="none" stroke="rgba(60,56,52,.42)" stroke-width="0.7" />
<polyline points="1538.7,256.3 1469.4,299.4" fill="none" stroke="rgba(60,56,52,.42)" stroke-width="0.7" />
<polyline points="1538.7,256.3 1547.9,340.7" fill="none" stroke="rgba(60,56,52,.42)" stroke-width="0.7" />
<polyline points="1538.7,256.3 1437.1,370.9" fill="none" stroke="rgba(60,56,52,.42)" stroke-width="0.7" />
<polyline points="1469.4,299.4 1412.4,361.6" fill="none" stroke="rgba(60,56,52,.42)" stroke-width="0.7" />
<polyline points="1547.9,340.7 1543.3,423.2" fill="none" stroke="rgba(60,56,52,.42)" stroke-width="0.7" />
<polyline points="1429.4,299.4 1256.9,493.4" fill="none" stroke="rgba(60,56,52,.42)" stroke-width="0.7" />
<polyline points="1373.9,341.6 1329.3,388.7" fill="none" stroke="rgba(60,56,52,.42)" stroke-width="0.7" />
<polyline points="1435.5,439.2 1474.0,355.5" fill="none" stroke="rgba(60,56,52,.42)" stroke-width="0.7" />
<polyline points="1546.4,378.0 1564.9,467.9" fill="none" stroke="rgba(60,56,52,.42)" stroke-width="0.7" />
<polyline points="1546.4,378.0 1472.5,423.2" fill="none" stroke="rgba(60,56,52,.42)" stroke-width="0.7" />
<polyline points="1421.7,363.2 1437.1,435.6" fill="none" stroke="rgba(60,56,52,.42)" stroke-width="0.7" />
<polyline points="1375.5,343.2 1474.0,349.3" fill="none" stroke="rgba(60,56,52,.42)" stroke-width="0.7" />
<polyline points="1341.6,388.7 1412.4,386.3" fill="none" stroke="rgba(60,56,52,.42)" stroke-width="0.7" />
<polyline points="1255.7,493.8 1282.5,587.1" fill="none" stroke="rgba(60,56,52,.42)" stroke-width="0.7" />
<polyline points="1277.9,493.8 1350.9,479.0" fill="none" stroke="rgba(60,56,52,.42)" stroke-width="0.7" />
<polyline points="1350.9,479.0 1440.0,472.5" fill="none" stroke="rgba(60,56,52,.42)" stroke-width="0.7" />
<polyline points="1265.0,502.1 1295.5,577.9" fill="none" stroke="rgba(60,56,52,.42)" stroke-width="0.7" />
<polyline points="1320.8,488.2 1277.0,559.4" fill="none" stroke="rgba(60,56,52,.42)" stroke-width="0.7" />
<polyline points="1379.6,430.0 1267.7,540.9" fill="none" stroke="rgba(60,56,52,.42)" stroke-width="0.7" />
<polyline points="1542.3,494.7 1536.8,610.0" fill="none" stroke="rgba(60,56,52,.42)" stroke-width="0.7" />
<polyline points="1565.4,468.8 1518.3,573.3" fill="none" stroke="rgba(60,56,52,.42)" stroke-width="0.7" />
<polyline points="1565.4,468.8 1514.6,610.0" fill="none" stroke="rgba(60,56,52,.42)" stroke-width="0.7" />
<polyline points="1483.2,430.0 1518.3,528.9" fill="none" stroke="rgba(60,56,52,.42)" stroke-width="0.7" />
<polyline points="1400.0,478.1 1461.0,468.8" fill="none" stroke="rgba(60,56,52,.42)" stroke-width="0.7" />
<polyline points="1461.0,468.8 1565.4,468.8" fill="none" stroke="rgba(60,56,52,.42)" stroke-width="0.7" />
<polyline points="1400.0,446.6 1437.0,430.0" fill="none" stroke="rgba(60,56,52,.42)" stroke-width="0.7" />
<polyline points="1418.0,525.4 1322.4,590.5" fill="none" stroke="#3a2f2a" stroke-width="1.5" />
<polyline points="1450.0,571.1 1412.1,604.4" fill="none" stroke="#3a2f2a" stroke-width="2" />
<polyline points="1429.4,299.4 1414.6,337.4" fill="none" stroke="#33261f" stroke-width="1.7" stroke-linecap="butt"/>
<polyline points="1414.6,337.3 1399.8,375.3" fill="none" stroke="#33261f" stroke-width="2.3" stroke-linecap="butt"/>
<polyline points="1399.8,375.3 1385.0,413.3" fill="none" stroke="#33261f" stroke-width="2.9" stroke-linecap="butt"/>
<polyline points="1385.0,413.2 1370.2,451.2" fill="none" stroke="#33261f" stroke-width="3.5" stroke-linecap="butt"/>
<polyline points="1370.2,451.2 1355.4,489.2" fill="none" stroke="#33261f" stroke-width="4.1" stroke-linecap="butt"/>
<polyline points="1355.4,489.1 1340.6,527.1" fill="none" stroke="#33261f" stroke-width="4.7" stroke-linecap="butt"/>
<polyline points="1340.6,527.1 1325.8,565.1" fill="none" stroke="#33261f" stroke-width="5.3" stroke-linecap="butt"/>
<polyline points="1325.8,565.0 1311.0,603.0" fill="none" stroke="#33261f" stroke-width="5.9" stroke-linecap="butt"/>
<polyline points="1538.7,256.3 1520.2,301.1" fill="none" stroke="#33261f" stroke-width="1.9" stroke-linecap="butt"/>
<polyline points="1520.2,301.1 1501.7,346.0" fill="none" stroke="#33261f" stroke-width="2.6" stroke-linecap="butt"/>
<polyline points="1501.7,346.0 1483.1,390.8" fill="none" stroke="#33261f" stroke-width="3.2" stroke-linecap="butt"/>
<polyline points="1483.1,390.8 1464.6,435.7" fill="none" stroke="#33261f" stroke-width="3.9" stroke-linecap="butt"/>
<polyline points="1464.6,435.6 1446.1,480.5" fill="none" stroke="#33261f" stroke-width="4.5" stroke-linecap="butt"/>
<polyline points="1446.1,480.5 1427.6,525.3" fill="none" stroke="#33261f" stroke-width="5.2" stroke-linecap="butt"/>
<polyline points="1427.5,525.3 1409.0,570.2" fill="none" stroke="#33261f" stroke-width="5.8" stroke-linecap="butt"/>
<polyline points="1409.0,570.2 1390.5,615.0" fill="none" stroke="#33261f" stroke-width="6.5" stroke-linecap="butt"/>
<polyline points="1546.4,378.0 1534.7,407.1" fill="none" stroke="#33261f" stroke-width="1.9" stroke-linecap="butt"/>
<polyline points="1534.7,407.1 1523.1,436.3" fill="none" stroke="#33261f" stroke-width="2.4" stroke-linecap="butt"/>
<polyline points="1523.1,436.2 1511.4,465.4" fill="none" stroke="#33261f" stroke-width="2.8" stroke-linecap="butt"/>
<polyline points="1511.4,465.4 1499.7,494.5" fill="none" stroke="#33261f" stroke-width="3.3" stroke-linecap="butt"/>
<polyline points="1499.7,494.5 1488.0,523.6" fill="none" stroke="#33261f" stroke-width="3.8" stroke-linecap="butt"/>
<polyline points="1488.0,523.6 1476.4,552.8" fill="none" stroke="#33261f" stroke-width="4.3" stroke-linecap="butt"/>
<polyline points="1476.3,552.8 1464.7,581.9" fill="none" stroke="#33261f" stroke-width="4.8" stroke-linecap="butt"/>
<polyline points="1464.7,581.9 1453.0,611.0" fill="none" stroke="#33261f" stroke-width="5.3" stroke-linecap="butt"/>
<polyline points="1469.4,299.4 1547.9,340.7" fill="none" stroke="#33261f" stroke-width="1.8" />
<polyline points="1373.9,341.6 1544.8,425.7" fill="none" stroke="#33261f" stroke-width="2.2" />
<polyline points="1328.7,388.7 1435.5,439.2" fill="none" stroke="#33261f" stroke-width="2.2" />
<polyline points="1472.5,423.2 1564.9,467.9" fill="none" stroke="#33261f" stroke-width="2.2" />
<polyline points="1255.7,493.8 1410.1,559.4" fill="none" stroke="#33261f" stroke-width="2.8" />
<polyline points="1320.8,488.2 1440.0,540.9 1518.3,573.3" fill="none" stroke="#33261f" stroke-width="3.2" />
<polyline points="1412.0,490.1 1518.3,528.9" fill="none" stroke="#33261f" stroke-width="4.2" />
<polyline points="1412.9,485.5 1518.3,522.4" fill="none" stroke="rgba(50,44,40,.6)" stroke-width="1" />
<polyline points="1483.2,430.0 1565.4,468.8" fill="none" stroke="#33261f" stroke-width="2.2" />
<polyline points="1542.3,494.7 1411.1,603.8" fill="none" stroke="#33261f" stroke-width="2.4" />
<polyline points="1320.8,488.2 1376.8,506.7" fill="none" stroke="#33261f" stroke-width="4" />
<polyline points="1558.4,569.7 1517.4,628.5" fill="none" stroke="#33261f" stroke-width="2.2" />
<circle cx="1558.6" cy="569.3" r="1.6" fill="#d9a030"/>
<polyline points="1265.0,532.6 1282.5,590.8" fill="none" stroke="#33261f" stroke-width="2" />
<polyline points="1326.9,438.3 1265.0,532.6" fill="none" stroke="rgba(60,56,52,.42)" stroke-width="0.8" />
<polyline points="1269.7,560.0 1283.6,593.3" fill="none" stroke="#4a3a30" stroke-width="3" />
<polygon points="1443.2,463.3 1458.6,464.8 1457.1,471.0 1441.7,469.4" fill="#6a4a36" />
<polygon points="1358.6,472.5 1369.3,474.0 1367.8,478.7 1357.0,477.1" fill="#6a4a36" />
<polygon points="1424.8,312.4 1428.5,313.9 1424.8,327.8 1421.1,327.8" fill="#b86a58" />
<polygon points="1543.3,390.9 1547.0,391.8 1544.8,400.1 1541.2,400.1" fill="#d9822b" />
<polygon points="1541.8,400.1 1544.8,400.1 1543.3,409.4 1539.3,409.4" fill="#3f7fb5" />
<polygon points="1531.0,273.9 1535.0,280.0 1531.0,286.2 1527.9,281.6" fill="#4a5560" />
<!--PICEND-->
  </g>
</defs>
<use href="#pic"/>
<polygon points="1381.5,96.5 1789,259.3 1545.3,869.3 1137.3,706.5" fill="none" stroke="#8a8a8a" stroke-width="1"/>
<!-- rotate handle -->
<line x1="1585.5" y1="177.7" x2="1602.5" y2="135.5" stroke="#9a9a9a" stroke-width="1.2"/>
<g transform="translate(1609 120)">
  <path d="M2.2 12.4 A12.6 12.6 0 1 1 12.5 1.6" fill="none" stroke="#646464" stroke-width="9.6"/>
  <path d="M3 -1 L28.5 7.5 L7.5 17.5 Z" fill="#646464" stroke="#646464" stroke-width="2" stroke-linejoin="round"/>
  <path d="M2.2 12.4 A12.6 12.6 0 1 1 12.5 1.6" fill="none" stroke="#fff" stroke-width="4.8"/>
  <path d="M8.5 5.5 L24.5 8 L9.5 15 Z" fill="#fff"/>
  <path d="M0 -1 L5.2 17.5" stroke="#000" stroke-width="2.4"/>
</g>
<!-- handles -->
<g fill="#fff" stroke="#6c6c6c" stroke-width="3.4">
  <circle cx="1381.7" cy="96.7" r="8.4"/><circle cx="1585.5" cy="177.8" r="8.4"/><circle cx="1789" cy="259.5" r="8.4"/>
  <circle cx="1260" cy="401.5" r="8.4"/><circle cx="1667" cy="564.5" r="8.4"/>
  <circle cx="1137.3" cy="706.7" r="8.4"/><circle cx="1341.3" cy="788" r="8.4"/><circle cx="1545.3" cy="869.5" r="8.4"/>
</g>
<!-- red annotations -->
<rect x="1535.5" y="78.5" width="147" height="126.5" fill="none" stroke="#c00000" stroke-width="3.6"/>
<rect x="1062.5" y="675.2" width="143.6" height="73.2" fill="none" stroke="#c00000" stroke-width="3.6"/>
<line x1="425.7" y1="500.2" x2="258" y2="413.3" stroke="#c00000" stroke-width="4"/>
<polygon points="242,405.1 265.8,404.7 255.7,423.9" fill="#c00000"/>
</svg>
<!-- NOTES -->
<div class="abs" style="left:308px;top:911px;width:1612px;height:1px;background:#d0d3d8"></div>
<div id="notes" class="abs">Click to add notes</div>

<!-- right scrollbar -->
<div class="abs" style="left:1896.5px;top:57px;width:31px;height:756px;background:#f5f5f5;border-radius:15px"></div>
<div class="abs" style="left:1904.5px;top:164.8px;width:15.5px;height:38px;background:#717171;border-radius:8px"></div>
<svg class="abs" style="left:1900px;top:62px" width="24" height="20" viewBox="0 0 24 20"><path d="M12 5.3 L18.7 14.8 H5.3 Z" fill="#717171" stroke="#717171" stroke-width="3" stroke-linejoin="round"/></svg>
<svg class="abs" style="left:1900px;top:787px" width="24" height="20" viewBox="0 0 24 20"><path d="M12 15 L18.7 5 H5.3 Z" fill="#717171" stroke="#717171" stroke-width="3" stroke-linejoin="round"/></svg>
<svg class="abs" style="left:1900px;top:813px" width="24" height="60" viewBox="0 0 24 60"><g fill="#717171" stroke="#717171" stroke-width="1.6" stroke-linejoin="round"><path d="M12 4 L18.6 13 H5.4 Z"/><path d="M12 12.5 L19 23 H5 Z"/><path d="M12 55 L18.6 46 H5.4 Z"/><path d="M12 46 L19 35.5 H5 Z"/></g></svg>
<!-- notes scroll -->
<div class="abs" style="left:1896.5px;top:915px;width:31px;height:56px;background:#f5f5f5;border-radius:15px"></div>
<svg class="abs" style="left:1900px;top:919px" width="24" height="20" viewBox="0 0 24 20"><path d="M12 5.3 L18.7 14.8 H5.3 Z" fill="#717171" stroke="#717171" stroke-width="3" stroke-linejoin="round"/></svg>
<svg class="abs" style="left:1900px;top:947px" width="24" height="20" viewBox="0 0 24 20"><path d="M12 15 L18.7 5 H5.3 Z" fill="#717171" stroke="#717171" stroke-width="3" stroke-linejoin="round"/></svg>
<!-- bottom strip -->
<div class="abs" style="left:0;top:969.7px;width:1920px;height:5px;background:linear-gradient(#fdfdfd,#f6f6f6)"></div>
<div class="abs" style="left:1248.3px;top:971.8px;width:74.2px;height:3px;background:#dcdcdc"></div>
</body>
</html>
